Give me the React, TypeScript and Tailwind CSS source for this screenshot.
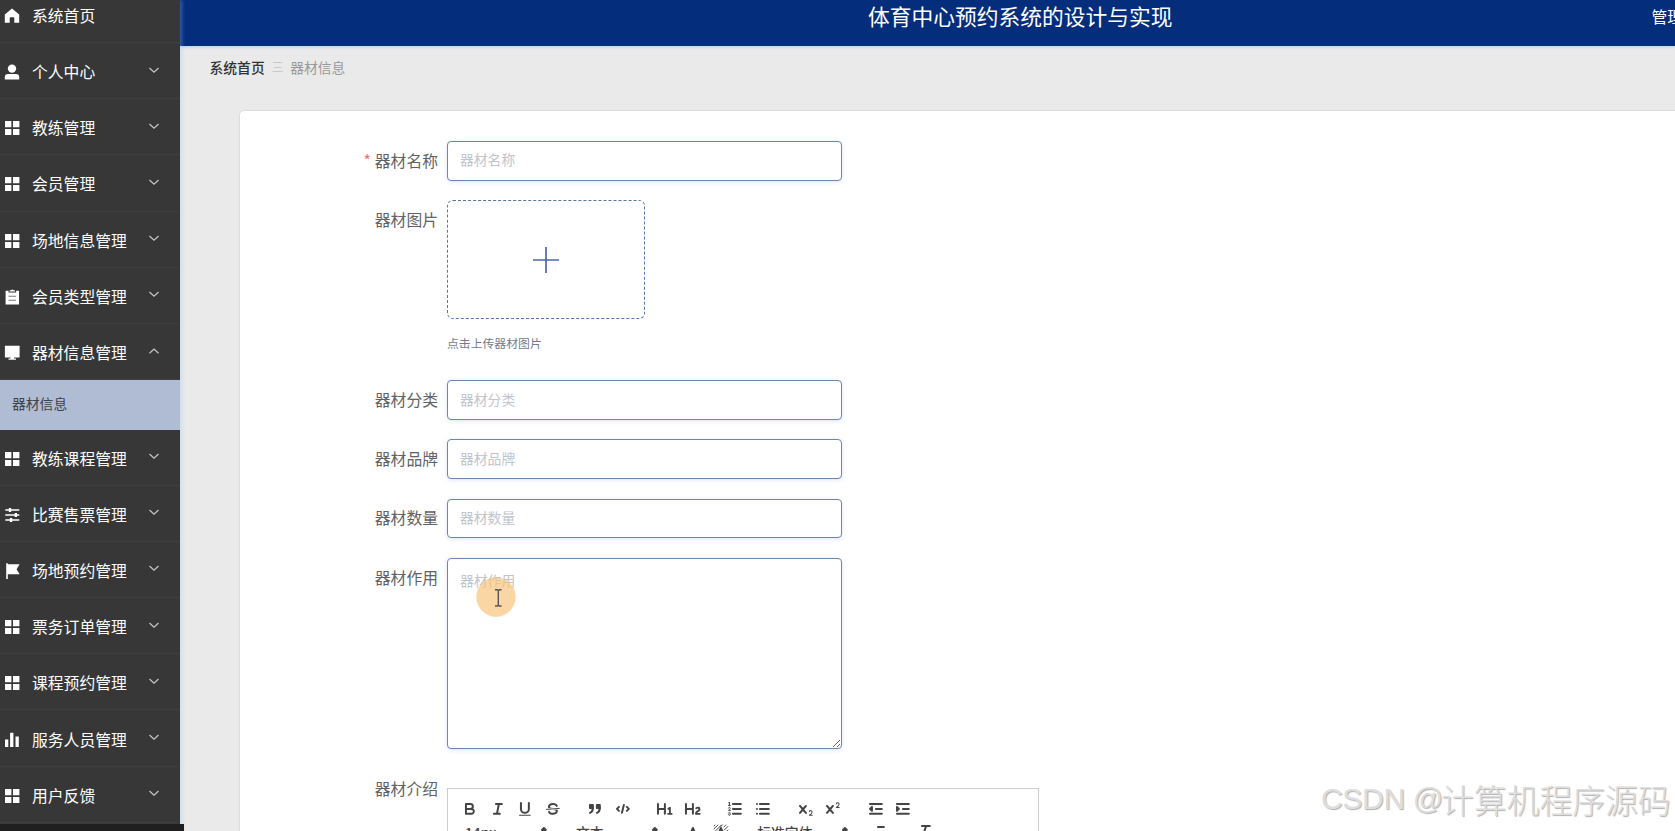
import React from "react";

type IconName = "home" | "user" | "grid" | "order" | "platform" | "sliders" | "flag" | "bars";

const menu: { label: string; icon: IconName; open?: boolean; plain?: boolean }[] = [
  { label: "系统首页", icon: "home", plain: true },
  { label: "个人中心", icon: "user" },
  { label: "教练管理", icon: "grid" },
  { label: "会员管理", icon: "grid" },
  { label: "场地信息管理", icon: "grid" },
  { label: "会员类型管理", icon: "order" },
  { label: "器材信息管理", icon: "platform", open: true },
  { label: "教练课程管理", icon: "grid" },
  { label: "比赛售票管理", icon: "sliders" },
  { label: "场地预约管理", icon: "flag" },
  { label: "票务订单管理", icon: "grid" },
  { label: "课程预约管理", icon: "grid" },
  { label: "服务人员管理", icon: "bars" },
  { label: "用户反馈", icon: "grid" },
];

const menuShapes: Record<IconName, React.ReactNode> = {
  home: <path d="M8 .4 15.2 6.4V14.8H10.3V10.2Q10.3 9.2 9.3 9.2H6.7Q5.7 9.2 5.7 10.2V14.8H.8V6.4Z" />,
  user: (
    <>
      <circle cx="8" cy="4.6" r="4.2" />
      <path d="M.8 15.4V13.2Q.8 9.9 4.3 9.9H11.7Q15.2 9.9 15.2 13.2V15.4Z" />
    </>
  ),
  grid: <path d="M1 1H7.4V7.2H1ZM9 1H15.4V7.2H9ZM1 8.9H7.4V15.1H1ZM9 8.9H15.4V15.1H9Z" />,
  order: (
    <>
      <path d="M1.6 1.8H4.5V3.4H12.1V1.8H15V15.5H1.6Z" />
      <path d="M5.5 1.2H6.9Q8.3 -.4 9.7 1.2H11.1V2.6H5.5Z" />
      <path d="M4.5 7.3H12.1M4.5 11.2H12.1" stroke="#777" strokeWidth="1.1" />
    </>
  ),
  platform: <path d="M.9 .8H15.6V12.4H10V13.6H12V14.8H4.5V13.6H6.5V12.4H.9Z" />,
  sliders: (
    <>
      <path d="M1.3 3H15.3M1.3 8H15.3M1.3 13H15.3" stroke="currentColor" strokeWidth="1.5" />
      <path d="M4.8 1H7.2V5H4.8ZM10.6 6H13V10H10.6ZM5.8 11H8.2V15H5.8Z" />
    </>
  ),
  flag: <path d="M2.2 .3H3.8V1.2H15.6L12.6 6.3 15.6 11.2H3.8V16H2.2Z" />,
  bars: <path d="M1 7.5H4.3V15H1ZM6.1 .8H9.4V15H6.1ZM11.5 4.5H14.8V15H11.5Z" />,
};

const X = "M9.65,5.241a1,1,0,0,0-1.409.108L6,7.964,3.759,5.349A1,1,0,0,0,2.192,6.59178Q2.21541,6.6213,2.241,6.649L4.684,9.5,2.241,12.35A1,1,0,0,0,3.71,13.70722q0.02557-.02768.049-0.05722L6,11.036,8.241,13.65a1,1,0,1,0,1.567-1.24277Q9.78459,12.3777,9.759,12.35L7.316,9.5,9.759,6.651A1,1,0,0,0,9.65,5.241Z";

function Fill({ d }: { d: string }) {
  return <path d={d} fill="#444" stroke="none" />;
}

const tools: Record<string, React.ReactNode> = {
  bold: (
    <>
      <path d="M5,4H9.5A2.5,2.5,0,0,1,12,6.5v0A2.5,2.5,0,0,1,9.5,9H5Z" />
      <path d="M5,9h5.5A2.5,2.5,0,0,1,13,11.5v0A2.5,2.5,0,0,1,10.5,14H5Z" />
    </>
  ),
  italic: <path d="M7 4H13M5 14H11M8 14L10 4" />,
  underline: (
    <>
      <path d="M5,3V9a4.012,4.012,0,0,0,4,4H9a4.012,4.012,0,0,0,4-4V3" />
      <rect x="3" y="15" width="12" height="1" rx=".5" fill="#444" stroke="none" />
    </>
  ),
  strike: (
    <>
      <path d="M15.5 8.5L2.5 9.5" strokeWidth="1" />
      <Fill d="M9.007,8C6.542,7.791,6,7.519,6,6.5,6,5.792,7.283,5,9,5c1.571,0,2.765.679,2.969,1.309a1,1,0,0,0,1.9-.617C13.356,4.106,11.354,3,9,3,6.2,3,4,4.538,4,6.5a3.2,3.2,0,0,0,.5,1.843Z" />
      <Fill d="M8.984,10C11.457,10.208,12,10.479,12,11.5c0,0.708-1.283,1.5-3,1.5-1.571,0-2.765-.679-2.969-1.309a1,1,0,1,0-1.9.617C4.644,13.894,6.646,15,9,15c2.8,0,5-1.538,5-3.5a3.2,3.2,0,0,0-.5-1.843Z" />
    </>
  ),
  quote: (
    <g fill="#444">
      <rect x="4" y="5" width="3" height="3" />
      <rect x="11" y="5" width="3" height="3" />
      <path d="M7,8c0,4.031-3,5-3,5M14,8c0,4.031-3,5-3,5" />
    </g>
  ),
  code: <path d="M5 7L3 9L5 11M13 7L15 9L13 11M10 5L8 13" />,
  h1: (
    <Fill d="M10,4V14a1,1,0,0,1-2,0V10H3v4a1,1,0,0,1-2,0V4A1,1,0,0,1,3,4V8H8V4a1,1,0,0,1,2,0Zm6.06787,9.209H14.98975V7.59863a.54085.54085,0,0,0-.605-.60547h-.62744a1.01119,1.01119,0,0,0-.748.29688L11.645,8.56641a.5435.5435,0,0,0-.022.8584l.28613.30762a.53861.53861,0,0,0,.84717.0332l.09912-.08789a1.2137,1.2137,0,0,0,.2417-.35254h.02246s-.01123.30859-.01123.60547V13.209H12.041a.54085.54085,0,0,0-.605.60547v.43945a.54085.54085,0,0,0,.605.60547h4.02686a.54085.54085,0,0,0,.605-.60547v-.43945A.54085.54085,0,0,0,16.06787,13.209Z" />
  ),
  h2: (
    <Fill d="M16.73975,13.81445v.43945a.54085.54085,0,0,1-.605.60547H11.855a.58392.58392,0,0,1-.64893-.60547V14.0127c0-2.90527,3.39941-3.42187,3.39941-4.55469a.77675.77675,0,0,0-.84717-.78125,1.17684,1.17684,0,0,0-.83594.38477c-.2749.26367-.561.374-.85791.13184l-.4292-.34082c-.30811-.24219-.38525-.51758-.1543-.81445a2.97155,2.97155,0,0,1,2.45361-1.17676,2.45393,2.45393,0,0,1,2.68408,2.40918c0,2.45312-3.1792,2.92676-3.27832,3.93848h2.79443A.54085.54085,0,0,1,16.73975,13.81445ZM9,3A.99974.99974,0,0,0,8,4V8H3V4A1,1,0,0,0,1,4V14a1,1,0,0,0,2,0V10H8v4a1,1,0,0,0,2,0V4A.99974.99974,0,0,0,9,3Z" />
  ),
  ordered: (
    <>
      <path d="M7 4H15M7 9H15M7 14H15" />
      <path strokeWidth="1" d="M2.5 5.5H4.5M4.5,10.5h-2c0-.234,1.85-1.076,1.85-2.234A0.959,0.959,0,0,0,2.5,8.156M2.5,14.846a0.959,0.959,0,0,0,1.85-.109A0.7,0.7,0,0,0,3.75,14a0.688,0.688,0,0,0,.6-0.736,0.959,0.959,0,0,0-1.85-.109" />
      <Fill d="M3.5,6A0.5,0.5,0,0,1,3,5.5V3.085l-0.276.138A0.5,0.5,0,0,1,2.053,3c-0.124-.247-0.023-0.324.224-0.447l1-.5A0.5,0.5,0,0,1,4,2.5v3A0.5,0.5,0,0,1,3.5,6Z" />
    </>
  ),
  bullet: <path d="M6 4H15M6 9H15M6 14H15M3 4H3.01M3 9H3.01M3 14H3.01" />,
  sub: (
    <>
      <Fill d="M15.5,15H13.861a3.858,3.858,0,0,0,1.914-2.975,1.8,1.8,0,0,0-1.6-1.751A1.921,1.921,0,0,0,12.021,11.7a0.50013,0.50013,0,1,0,.957.291h0a0.914,0.914,0,0,1,1.053-.725,0.81,0.81,0,0,1,.744.762c0,1.076-1.16971,1.86982-1.93971,2.43082A1.45639,1.45639,0,0,0,12,15.5a0.5,0.5,0,0,0,.5.5h3A0.5,0.5,0,0,0,15.5,15Z" />
      <Fill d={X} />
    </>
  ),
  sup: (
    <>
      <Fill d="M15.5,7H13.861a4.015,4.015,0,0,0,1.914-2.975,1.8,1.8,0,0,0-1.6-1.751A1.922,1.922,0,0,0,12.021,3.7a0.5,0.5,0,1,0,.957.291,0.917,0.917,0,0,1,1.053-.725,0.81,0.81,0,0,1,.744.762c0,1.077-1.164,1.925-1.934,2.486A1.423,1.423,0,0,0,12,7.5a0.5,0.5,0,0,0,.5.5h3A0.5,0.5,0,0,0,15.5,7Z" />
      <Fill d={X} />
    </>
  ),
  outdent: (
    <>
      <path d="M3 14H15M3 4H15M9 9H15" />
      <path fill="#444" d="M5 7V11L3 9Z" />
    </>
  ),
  indent: (
    <>
      <path d="M3 14H15M3 4H15M9 9H15" />
      <path fill="#444" d="M3 7V11L5 9Z" />
    </>
  ),
  arrows: <path fill="#444" d="M7 11L9 13L11 11ZM7 7L9 5L11 7Z" />,
  color: <path d="M5.5 13L9 5L12.5 13M11.63 11H6.38" />,
  background: (
    <>
      <path strokeWidth="1" d="M2 6L6 2M2 9.5L5 6.5M5.5 6L9.5 2M9 3.5L10.5 2M12 4L14 2M12.5 7L16 3.5M13.5 9.5L16 7M2 3L3 2" />
      <path d="M5.5 13L9 5L12.5 13M11.63 11H6.38" />
    </>
  ),
  align: <path d="M3 9H15M3 14H13M3 4H9" />,
  clean: <path d="M5 3H13M6 12L9.35 3M11 11L15 15M15 11L11 15" />,
};

function Tool({ name }: { name: string }) {
  return (
    <span className="flex h-6 w-[27.65px] shrink-0 items-center justify-center">
      <svg viewBox="0 0 18 18" className="size-[17.8px]" fill="none" stroke="#444" strokeWidth="2" strokeLinecap="round" strokeLinejoin="round">
        {tools[name]}
      </svg>
    </span>
  );
}

function Picker({ label, className }: { label: string; className: string }) {
  return (
    <span className={`flex h-6 shrink-0 items-center justify-between pl-2 text-[13.8px] font-medium text-[#444] ${className}`}>
      <span>{label}</span>
      <svg viewBox="0 0 18 18" className="size-[17.8px]" stroke="#444" strokeWidth="2" strokeLinejoin="round">
        {tools.arrows}
      </svg>
    </span>
  );
}

const groups = [
  ["bold", "italic", "underline", "strike"],
  ["quote", "code"],
  ["h1", "h2"],
  ["ordered", "bullet"],
  ["sub", "sup"],
  ["outdent", "indent"],
];

function Field({ label, required, className, children }: { label: string; required?: boolean; className: string; children: React.ReactNode }) {
  return (
    <div className={`flex items-start ${className}`}>
      <div className="flex h-[39.5px] w-[198px] shrink-0 items-center justify-end gap-1 text-[15.8px] whitespace-nowrap text-[#606266]">
        {required && <span className="text-[15.8px] text-[#f56c6c]">*</span>}
        <span>{label}</span>
      </div>
      <div className="ml-[9px] shrink-0">{children}</div>
    </div>
  );
}

const control =
  "block w-[395px] rounded-[4px] border border-[#6c86b2] bg-white px-3 text-[13.8px] text-[#606266] shadow-[0_1px_4px_rgba(40,80,180,0.16)] outline-none placeholder:text-[#c0c4cc]";

export default function App() {
  return (
    <div className="relative flex h-[831px] w-[1675px] overflow-hidden bg-[#eaeaea] font-['Noto_Sans_CJK_SC',sans-serif]">
      <aside className="relative z-10 w-[180px] shrink-0 bg-[#373737] shadow-[2px_0_4px_rgba(150,200,255,0.35)]">
        <nav className="-mt-[13.2px]">
          {menu.map((m) => (
            <React.Fragment key={m.label}>
              <div className="flex h-[56.2px] items-center border-b border-[#3e3e3e] pt-[3px] pr-[20px] pl-1 text-white">
                <svg viewBox="0 0 16 16" className="size-4 shrink-0" fill="currentColor">
                  {menuShapes[m.icon]}
                </svg>
                <span className="ml-3 text-[15.8px] leading-6 whitespace-nowrap">{m.label}</span>
                {!m.plain && (
                  <svg viewBox="0 0 12 8" className="-mt-[5px] ml-auto h-2 w-3" fill="none" stroke="#c8c8c8" strokeWidth="1.2">
                    {m.open ? <path d="M1.5 6.2L6 2L10.5 6.2" /> : <path d="M1.5 2L6 6.2L10.5 2" />}
                  </svg>
                )}
              </div>
              {m.open && (
                <div className="flex h-[49.4px] items-center bg-[#b0bbd4] pb-[2px] pl-3 text-[13.8px] text-[#404249]">器材信息</div>
              )}
            </React.Fragment>
          ))}
        </nav>
      </aside>

      <div className="flex min-w-0 flex-1 flex-col">
        <header className="flex h-[46px] shrink-0 bg-[#042d7c] text-white shadow-[0_1px_3px_#b4cbe8]">
          <h1 className="-mt-[2px] ml-[688px] h-[35px] text-[21.75px] leading-[35px] whitespace-nowrap">体育中心预约系统的设计与实现</h1>
          <span className="ml-auto w-[23.5px] overflow-hidden text-[15.8px] leading-[33px] whitespace-nowrap">管理员</span>
        </header>

        <div className="mt-[10px] ml-[29.5px] flex h-[22px] items-center text-[13.8px] leading-[22px]">
          <span className="font-medium text-[#303133]">系统首页</span>
          <span className="mr-[6.5px] ml-[7px] text-[12px] text-[#c6c9ce]">三</span>
          <span className="text-[#999]">器材信息</span>
        </div>

        <main className="mt-[32px] ml-[59px] w-[1500px] flex-1 rounded-tl-[5px] border border-[#dcdcdc] bg-white pt-[30px] [border-bottom:0]">
          <Field label="器材名称" required className="h-[59.2px]">
            <input className={`${control} h-[39.5px] pb-[3px]`} placeholder="器材名称" />
          </Field>
          <Field label="器材图片" className="h-[180px]">
            <div className="flex h-[118.5px] w-[197.5px] items-center justify-center rounded-[6px] border border-dashed border-[#5575a8]">
              <svg viewBox="0 0 26 26" className="mt-[2px] size-[26px]" stroke="#4a67a8" strokeWidth="1.7">
                <path d="M13 0V26M0 13H26" />
              </svg>
            </div>
            <p className="mt-[14.5px] text-[11.85px] leading-5 text-[#727b8c]">点击上传器材图片</p>
          </Field>
          <Field label="器材分类" className="h-[59.2px]">
            <input className={`${control} h-[39.5px] pb-[2px]`} placeholder="器材分类" />
          </Field>
          <Field label="器材品牌" className="h-[59.2px]">
            <input className={`${control} h-[39.5px] pb-[2px]`} placeholder="器材品牌" />
          </Field>
          <Field label="器材数量" className="h-[59.2px]">
            <input className={`${control} h-[39.5px] pb-[2px]`} placeholder="器材数量" />
          </Field>
          <Field label="器材作用" className="h-[211px]">
            <textarea className={`${control} h-[191px] resize pt-[11px] leading-[21px]`} placeholder="器材作用" />
          </Field>
          <Field label="器材介绍" className="">
            <div className="mt-[19px] h-[200px] w-[592px] border border-[#ccc] px-2 pt-[8px]">
              <div className="flex gap-[14.8px]">
                {groups.map((g) => (
                  <span key={g[0]} className="flex">
                    {g.map((n) => (
                      <Tool key={n} name={n} />
                    ))}
                  </span>
                ))}
              </div>
              <div className="-mt-[0.5px] ml-px flex">
                <Picker label="14px" className="w-[96px]" />
                <Picker label="文本" className="ml-[15px] w-[96px]" />
                <span className="ml-[15px] flex">
                  <Tool name="color" />
                  <Tool name="background" />
                </span>
                <Picker label="标准字体" className="ml-[15px] w-[105px]" />
                <span className="ml-[15.5px] flex gap-[14.8px]">
                  <Tool name="align" />
                  <Tool name="clean" />
                </span>
              </div>
            </div>
          </Field>
        </main>
      </div>

      <svg viewBox="0 0 40 40" className="pointer-events-none absolute top-[577px] left-[475.5px] size-10" fill="none">
        <circle cx="20" cy="20" r="19.7" fill="#f7c47c" fillOpacity=".7" />
        <path d="M19 12.8H21.3L22.3 13.8L23.3 12.8H25.6M22.3 13.5V28.5M19 29H21.3L22.3 28L23.3 29H25.6" stroke="#555" strokeWidth="1.4" />
      </svg>
      <div className="absolute top-[824px] left-0 z-20 h-[7px] w-[184px] bg-[#1f1f1f]" />
      <div className="absolute top-[774px] left-[1321px] flex h-[50px] items-center text-[32.8px] leading-none font-light whitespace-nowrap text-[#dedede] [text-shadow:1px_1px_1px_#b0b0b0]">
        <span className="w-[120px] font-['Liberation_Sans'] text-[30px] tracking-[-0.3px]">CSDN&nbsp;@</span>
        <span>计算机程序源码</span>
      </div>
    </div>
  );
}
